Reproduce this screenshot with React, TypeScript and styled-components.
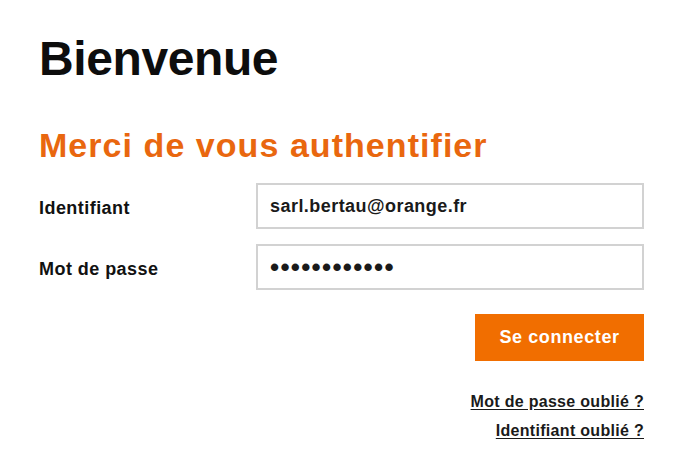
import React from "react";
import styled, { createGlobalStyle } from "styled-components";

const GlobalStyle = createGlobalStyle`
  html, body {
    margin: 0;
    padding: 0;
    background: #ffffff;
  }
  body {
    font-family: "Liberation Sans", Arial, Helvetica, sans-serif;
    color: #111111;
  }
  * { box-sizing: border-box; }
`;

const Page = styled.main`
  width: 688px;
  height: 460px;
  padding: 35px 44px 0 39px;
  display: flex;
  flex-direction: column;
`;

const Title = styled.h1`
  margin: 0;
  font-size: 48px;
  line-height: 48px;
  font-weight: 700;
  color: #0d0d0d;
  letter-spacing: -0.4px;
`;

const Subtitle = styled.h2`
  margin: 45px 0 0 0;
  font-size: 34px;
  line-height: 34px;
  font-weight: 700;
  color: #e9670f;
  letter-spacing: 1.05px;
`;

const Form = styled.form`
  margin-top: 21px;
  display: flex;
  flex-direction: column;
`;

const Fields = styled.div`
  display: grid;
  grid-template-columns: 217px 1fr;
  row-gap: 15px;
  align-items: center;
`;

const Label = styled.label`
  font-size: 18px;
  font-weight: 700;
  letter-spacing: 0.45px;
  color: #111111;
  padding-top: 5px;
`;

const Input = styled.input<{ $secret?: boolean }>`
  height: 46px;
  width: 100%;
  border: 2px solid #d2d2d2;
  border-radius: 0;
  background: #ffffff;
  padding: 0 12px;
  font-family: "Liberation Sans", Arial, sans-serif;
  font-weight: 700;
  color: #1a1a1a;
  outline: none;
  font-size: ${(p) => (p.$secret ? "26px" : "18px")};
  letter-spacing: ${(p) => (p.$secret ? "1.3px" : "0.45px")};
`;

const Actions = styled.div`
  margin-top: 24px;
  display: flex;
  flex-direction: column;
  align-items: flex-end;
`;

const Button = styled.button`
  width: 169px;
  height: 47px;
  border: none;
  border-radius: 0;
  background: #f16e00;
  color: #ffffff;
  font-family: "Liberation Sans", Arial, sans-serif;
  font-size: 18px;
  font-weight: 700;
  letter-spacing: 0.6px;
  cursor: pointer;
`;

const Links = styled.div`
  margin-top: 31px;
  display: flex;
  flex-direction: column;
  align-items: flex-end;
  gap: 10px;
`;

const Link = styled.a`
  font-size: 16px;
  line-height: 19px;
  font-weight: 700;
  letter-spacing: 0.3px;
  color: #1a1a1a;
  text-decoration: underline;
  text-underline-offset: 2px;
  cursor: pointer;
`;

export default function App() {
  return (
    <>
      <GlobalStyle />
      <Page>
        <Title>Bienvenue</Title>
        <Subtitle>Merci de vous authentifier</Subtitle>
        <Form onSubmit={(e) => e.preventDefault()}>
          <Fields>
            <Label htmlFor="login">Identifiant</Label>
            <Input id="login" type="text" defaultValue="sarl.bertau@orange.fr" />
            <Label htmlFor="password">Mot de passe</Label>
            <Input id="password" type="password" $secret defaultValue="motdepasse12" />
          </Fields>
          <Actions>
            <Button type="submit">Se connecter</Button>
            <Links>
              <Link href="#">Mot de passe oublié ?</Link>
              <Link href="#">Identifiant oublié ?</Link>
            </Links>
          </Actions>
        </Form>
      </Page>
    </>
  );
}
